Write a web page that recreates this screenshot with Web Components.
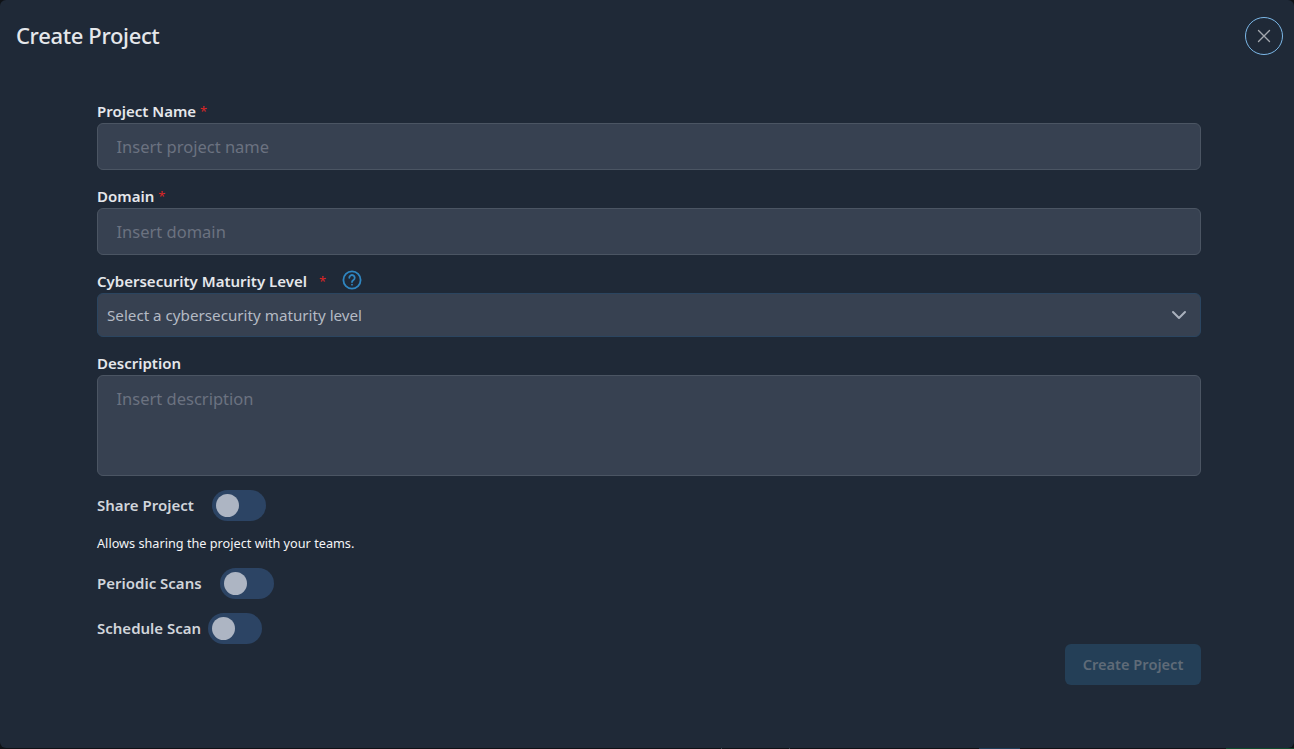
<!DOCTYPE html>
<html lang="en"><head><meta charset="utf-8"><title>Create Project</title>
<style>
html,body{margin:0;height:100%;background:#0f1216;overflow:hidden}
body{font-family:"Noto Sans","Open Sans",sans-serif}
</style></head><body>
<create-project-modal></create-project-modal>
<script>
class Base extends HTMLElement{
  constructor(){super();this.attachShadow({mode:'open'}).innerHTML=this.constructor.markup(this);}
}
class FormField extends Base{
  static markup(el){const req=el.hasAttribute('required');return `<style>
  :host{display:block;margin-bottom:15px}
  :host([tight]){margin-bottom:14px}
  .lab{display:flex;align-items:center;height:23px;padding-bottom:2px;font-size:15px;font-weight:600;color:#e5e7eb;line-height:18px;box-sizing:border-box}
  .req{color:#dc2626;margin-left:4px;font-weight:400;font-size:13px}
  :host([wide]) .req{margin-left:12px}
  </style><div class="lab"><span>${el.getAttribute('label')}</span>${req?'<span class="req">*</span>':''}<slot name="extra"></slot></div><slot></slot>`}
}
class TextBox extends Base{
  static markup(el){const h=el.getAttribute('h')||47;return `<style>
  :host{display:block}
  .b{box-sizing:border-box;height:${h}px;background:#374151;border:1px solid #4b5563;border-radius:6px;padding:12px 18px 12px 18.5px;font-size:16.5px;line-height:22px;color:#6b7280}
  </style><div class="b">${el.getAttribute('placeholder')}</div>`}
}
class SelectBox extends Base{
  static markup(el){return `<style>
  :host{display:block}
  .b{box-sizing:border-box;height:44px;background:#374151;border:1px solid #2b4560;border-radius:6px;padding:0 13px 0 9px;font-size:15.2px;color:#b4bac4;display:flex;align-items:center;justify-content:space-between}
  svg{display:block}
  </style><div class="b"><span>${el.getAttribute('placeholder')}</span><svg width="16" height="16" viewBox="0 0 16 16" fill="none" stroke="#aab1bd" stroke-width="2" stroke-linecap="round" stroke-linejoin="round"><path d="M2 5l6 6 6-6"/></svg></div>`}
}
class ToggleRow extends Base{
  static markup(el){return `<style>
  :host{display:flex;align-items:center;height:31px;font-size:15px;font-weight:600;color:#d1d5db;gap:${el.getAttribute('gap')||18}px}
  .l{padding-bottom:1px}
  .t{width:54px;height:31px;border-radius:16px;background:#2c4464;position:relative;flex:none}
  .k{position:absolute;left:4px;top:4px;width:23px;height:23px;border-radius:50%;background:#adb5c3}
  </style><span class="l">${el.getAttribute('label')}</span><span class="t"><span class="k"></span></span>`}
}
class CreateProjectModal extends Base{
  static markup(){return `<style>
  :host{display:block;height:748px;background:#1f2937;position:relative;border-radius:6px;color:#e5e7eb}
  header{display:flex;justify-content:space-between;align-items:center;padding:17px 11px 0 16px;height:38px}
  h1{margin:0;font-size:22px;font-weight:500;color:#e5e7eb;line-height:36px;height:38px;letter-spacing:-.35px}
  .x{box-sizing:border-box;width:38px;height:38px;border:1px solid #7cb8e8;border-radius:50%;display:flex;align-items:center;justify-content:center}
  form{display:block;margin:45px 93px 0 97px}
  .note{font-size:12.7px;color:#f3f4f6;line-height:16px;margin:14px 0 17px}
  .gap{height:14px}
  .act{display:flex;justify-content:flex-end}
  button{font:600 14.6px "Noto Sans","Open Sans",sans-serif;color:#5f6b78;background:#243f57;border:0;border-radius:6px;width:136px;height:41px;padding:0 0 2px}
  .strip{position:absolute;left:0;right:0;top:748px;height:1px;background:linear-gradient(to right,transparent 721px,#3a4a4f 721px,#3a4a4f 722px,transparent 722px,transparent 789px,#3a4a4f 789px,#3a4a4f 790px,transparent 790px,transparent 979px,#1f3d55 979px,#1f3d55 1020px,transparent 1020px,transparent 1226px,#0f4a2c 1226px)}
  </style>
  <header><h1>Create Project</h1><span class="x" role="button" aria-label="Close"><svg width="16" height="16" viewBox="0 0 16 16" fill="none" stroke="#a3a7ad" stroke-width="1.4" stroke-linecap="round"><path d="M2.5 2.5l11 11M13.5 2.5l-11 11"/></svg></span></header>
  <form>
    <form-field label="Project Name" required><text-box placeholder="Insert project name"></text-box></form-field>
    <form-field label="Domain" required><text-box placeholder="Insert domain"></text-box></form-field>
    <form-field label="Cybersecurity Maturity Level" required wide>
      <svg slot="extra" style="margin:-1px 0 0 16px;display:block" width="20" height="20" viewBox="0 0 20 20" fill="none" stroke="#2f86c1" stroke-width="1.8" stroke-linecap="round"><circle cx="10" cy="10" r="8.6"/><path d="M7.3 7.8a2.7 2.7 0 1 1 4.2 2.2c-.9.6-1.5 1-1.5 2"/><path d="M10 14.6v.1"/></svg>
      <select-box placeholder="Select a cybersecurity maturity level"></select-box></form-field>
    <form-field label="Description" tight><text-box multi h="101" placeholder="Insert description"></text-box></form-field>
    <toggle-row label="Share Project"></toggle-row>
    <div class="note">Allows sharing the project with your teams.</div>
    <toggle-row label="Periodic Scans"></toggle-row>
    <div class="gap"></div>
    <toggle-row label="Schedule Scan" gap="7"></toggle-row>
    <div class="act"><button type="button" disabled>Create Project</button></div>
  </form><div class="strip"></div>`}
}
customElements.define('form-field',FormField);
customElements.define('text-box',TextBox);
customElements.define('select-box',SelectBox);
customElements.define('toggle-row',ToggleRow);
customElements.define('create-project-modal',CreateProjectModal);
</script>
</body></html>
